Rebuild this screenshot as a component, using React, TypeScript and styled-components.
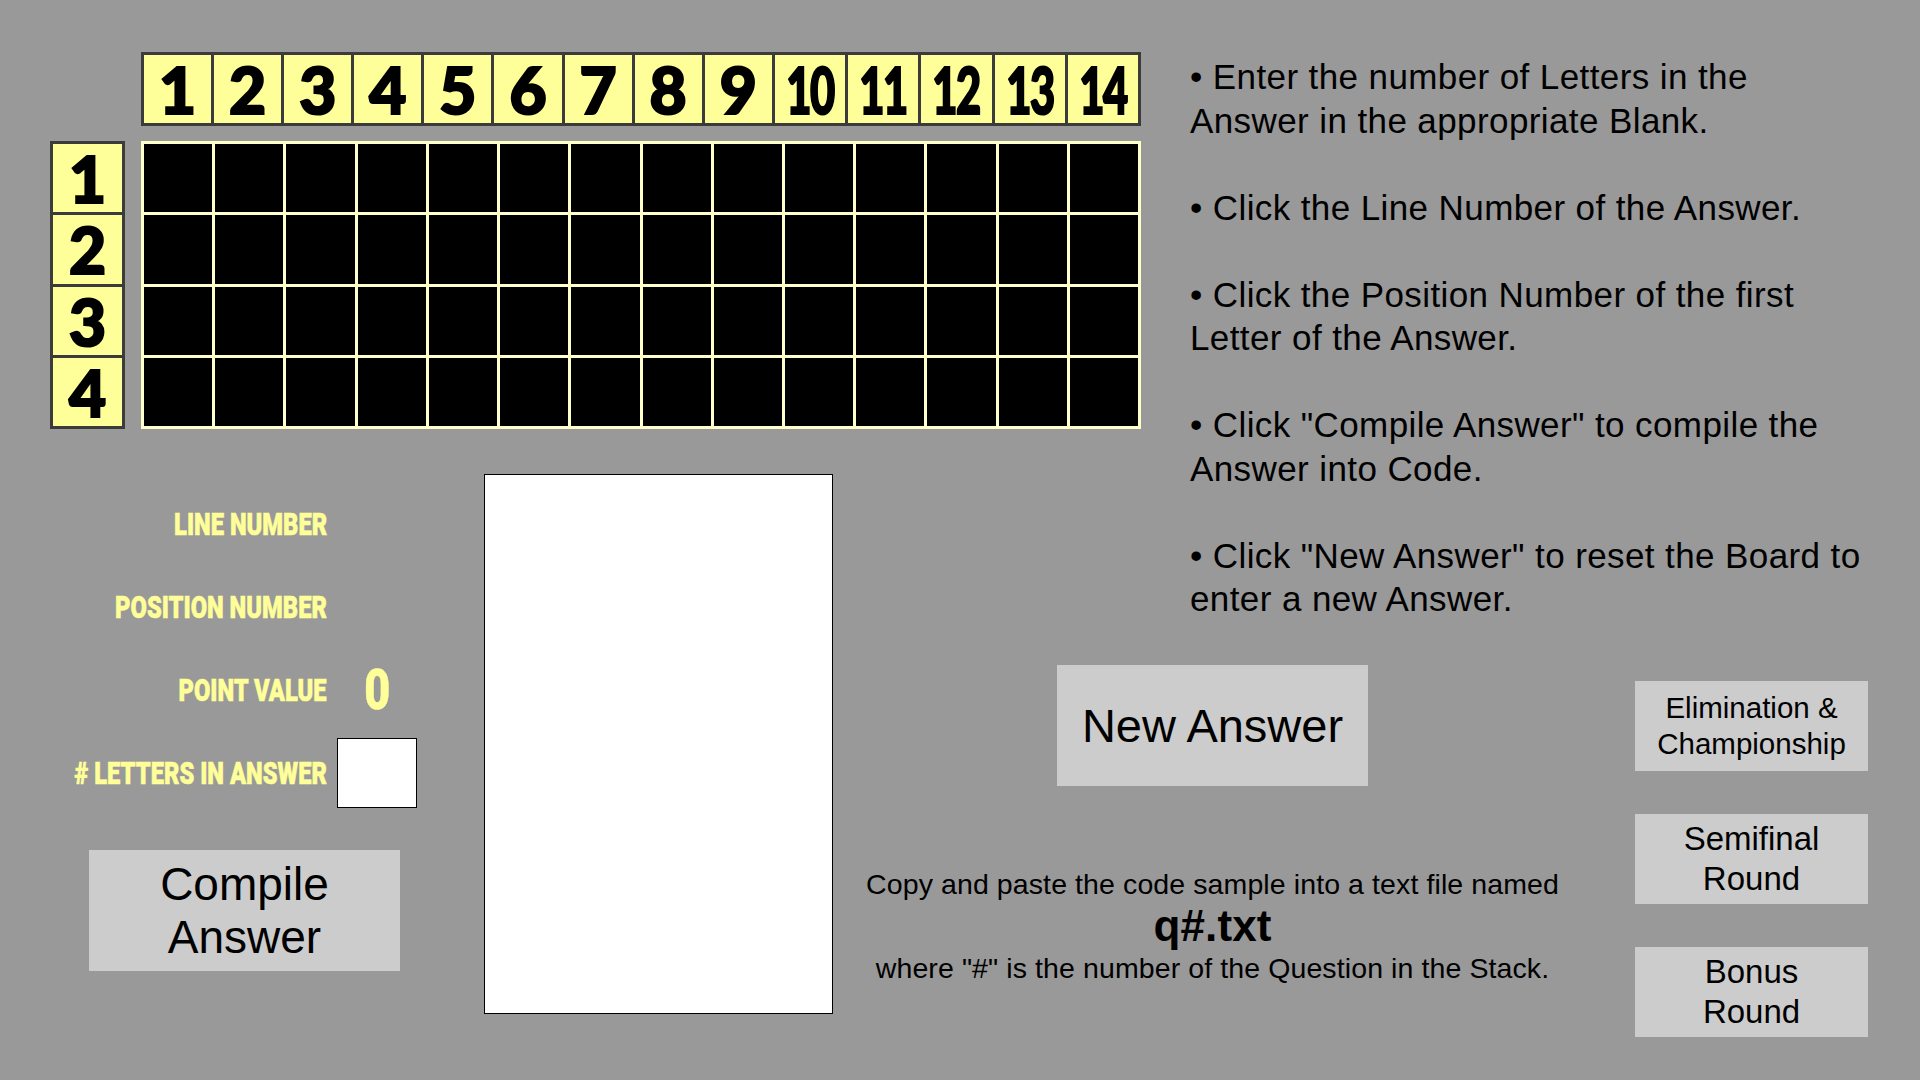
import React from "react";
import styled, { createGlobalStyle } from "styled-components";

const Global = createGlobalStyle`
  html, body { margin: 0; padding: 0; background: #999999; }
  body { font-family: "Liberation Sans", Arial, sans-serif; color: #000; }
  * { box-sizing: border-box; }
`;

const Page = styled.div`
  width: 1920px;
  height: 1080px;
  padding-left: 50px;
  display: grid;
  grid-template-columns: 800px 340px 385px 345px;
  grid-template-rows: 440px 205px 1fr;
  grid-template-areas:
    "board board instr instr"
    "lower . instr instr"
    "lower center center side";
  overflow: hidden;
  background: #999999;
`;

/* ---------- Board ---------- */
const Board = styled.div`
  grid-area: board;
  padding-top: 52px;
  display: flex;
  flex-direction: column;
  gap: 15px;
`;

const HeaderRow = styled.div`
  margin-left: 91px;
  width: 1000px;
  height: 74px;
  padding: 3px;
  background: #3b3b3b;
  display: grid;
  grid-template-columns: repeat(14, 1fr);
  gap: 3px;
`;

const NumCell = styled.div`
  background: #ffff99;
  display: flex;
  align-items: center;
  justify-content: center;
`;

const Digits = styled.span<{ $wide: boolean }>`
  font-family: "Lato Black", Lato, "DejaVu Sans", sans-serif;
  font-weight: 900;
  font-size: 64px;
  line-height: 1;
  color: #000;
  -webkit-text-stroke: 2.2px #000;
  letter-spacing: ${(p) => (p.$wide ? "-2px" : "0")};
  transform: ${(p) => (p.$wide ? "scaleX(0.68)" : "none")};
  display: inline-block;
  margin-top: 2px;
  white-space: nowrap;
`;

const BodyRow = styled.div`
  display: flex;
  gap: 16px;
`;

const LineColumn = styled.div`
  width: 75px;
  height: 288px;
  padding: 3px;
  background: #3b3b3b;
  display: grid;
  grid-template-rows: repeat(4, 1fr);
  gap: 3px;
`;

const LetterGrid = styled.div`
  width: 1000px;
  height: 288px;
  padding: 3px;
  background: #ffffcc;
  display: grid;
  grid-template-columns: repeat(14, 1fr);
  grid-template-rows: repeat(4, 1fr);
  gap: 3px;
`;

const Tile = styled.div`
  background: #000;
`;

/* ---------- Instructions ---------- */
const Instructions = styled.div`
  grid-area: instr;
  padding-top: 55px;
  font-family: "Liberation Sans", Arial, sans-serif;
  font-size: 35px;
  letter-spacing: 0.4px;
  line-height: 43.5px;
  color: #000;
`;

const Step = styled.p`
  margin: 0 0 43.5px 0;
  white-space: nowrap;
`;

/* ---------- Lower left ---------- */
const Lower = styled.div`
  grid-area: lower;
  display: flex;
  align-items: flex-start;
  padding-top: 34px;
  gap: 67px;
`;

const Controls = styled.div`
  width: 367px;
  margin-top: 15px;
  display: flex;
  flex-direction: column;
`;

const FieldGrid = styled.div`
  display: grid;
  grid-template-columns: 277px 80px;
  grid-auto-rows: 70px;
  column-gap: 10px;
  row-gap: 13px;
  align-items: center;
`;

const LabelCell = styled.div`
  display: flex;
  justify-content: flex-end;
  align-items: center;
`;

const CondensedText = styled.span<{ $size: number }>`
  display: inline-block;
  color: #ffff99;
  font-family: Roboto, "Liberation Sans", sans-serif;
  font-weight: 900;
  font-size: ${(p) => p.$size}px;
  line-height: 1;
  white-space: nowrap;
  -webkit-text-stroke: 0.6px #ffff99;
  transform: scaleX(0.765);
  transform-origin: right center;
`;

const ValueCell = styled.div`
  display: flex;
  justify-content: center;
  align-items: center;
`;

const BigValue = styled(CondensedText)`
  transform-origin: center center;
  transform: scaleX(0.8);
`;

const LetterInput = styled.input`
  width: 80px;
  height: 70px;
  margin: 0;
  border: 1px solid #000;
  background: #fff;
  padding: 0;
  font-size: 30px;
`;

const GreyButton = styled.button`
  background: #cccccc;
  border: none;
  padding: 0;
  margin: 0;
  color: #000;
  font-family: "Liberation Sans", Arial, sans-serif;
  display: flex;
  align-items: center;
  justify-content: center;
  text-align: center;
  cursor: pointer;
`;

const CompileButton = styled(GreyButton)`
  margin-top: 42px;
  margin-left: 39px;
  width: 311px;
  height: 121px;
  font-size: 46px;
  line-height: 53px;
`;

const CodeBox = styled.textarea`
  width: 349px;
  height: 540px;
  margin: 0;
  border: 1px solid #000;
  background: #fff;
  resize: none;
  outline: none;
`;

/* ---------- Center ---------- */
const Center = styled.div`
  grid-area: center;
  display: flex;
  flex-direction: column;
  align-items: center;
  padding-top: 20px;
`;

const NewAnswerButton = styled(GreyButton)`
  width: 311px;
  height: 121px;
  font-size: 47px;
  line-height: 1;
`;

const Note = styled.div`
  margin-top: 80px;
  text-align: center;
  font-family: "Liberation Sans", Arial, sans-serif;
  font-size: 28.5px;
  letter-spacing: 0.1px;
  line-height: 36px;
  white-space: nowrap;
`;

const FileName = styled.div`
  font-weight: 700;
  font-size: 44px;
  line-height: 48px;
`;

/* ---------- Side ---------- */
const Side = styled.div`
  grid-area: side;
  display: flex;
  flex-direction: column;
  padding-top: 36px;
  padding-left: 60px;
  gap: 43px;
`;

const RoundButton = styled(GreyButton)<{ $size: number; $line: number }>`
  width: 233px;
  height: 90px;
  font-size: ${(p) => p.$size}px;
  line-height: ${(p) => p.$line}px;
`;

const columns = Array.from({ length: 14 }, (_, i) => i + 1);
const lines = [1, 2, 3, 4];

const fields: { label: string; value?: "zero" | "input" }[] = [
  { label: "LINE NUMBER" },
  { label: "POSITION NUMBER" },
  { label: "POINT VALUE", value: "zero" },
  { label: "# LETTERS IN ANSWER", value: "input" },
];

export default function App() {
  return (
    <>
      <Global />
      <Page>
        <Board>
          <HeaderRow>
            {columns.map((n) => (
              <NumCell key={n}>
                <Digits $wide={n > 9}>{n}</Digits>
              </NumCell>
            ))}
          </HeaderRow>
          <BodyRow>
            <LineColumn>
              {lines.map((n) => (
                <NumCell key={n}>
                  <Digits $wide={false}>{n}</Digits>
                </NumCell>
              ))}
            </LineColumn>
            <LetterGrid>
              {lines.map((r) =>
                columns.map((c) => <Tile key={`${r}-${c}`} />)
              )}
            </LetterGrid>
          </BodyRow>
        </Board>

        <Instructions>
          <Step>
            • Enter the number of Letters in the
            <br />
            Answer in the appropriate Blank.
          </Step>
          <Step>• Click the Line Number of the Answer.</Step>
          <Step>
            • Click the Position Number of the first
            <br />
            Letter of the Answer.
          </Step>
          <Step>
            • Click "Compile Answer" to compile the
            <br />
            Answer into Code.
          </Step>
          <Step>
            • Click "New Answer" to reset the Board to
            <br />
            enter a new Answer.
          </Step>
        </Instructions>

        <Lower>
          <Controls>
            <FieldGrid>
              {fields.map((f) => (
                <React.Fragment key={f.label}>
                  <LabelCell>
                    <CondensedText $size={31}>{f.label}</CondensedText>
                  </LabelCell>
                  <ValueCell>
                    {f.value === "zero" && <BigValue $size={56}>0</BigValue>}
                    {f.value === "input" && <LetterInput type="text" />}
                  </ValueCell>
                </React.Fragment>
              ))}
            </FieldGrid>
            <CompileButton>
              Compile
              <br />
              Answer
            </CompileButton>
          </Controls>
          <CodeBox readOnly />
        </Lower>

        <Center>
          <NewAnswerButton>New Answer</NewAnswerButton>
          <Note>
            Copy and paste the code sample into a text file named
            <FileName>q#.txt</FileName>
            where "#" is the number of the Question in the Stack.
          </Note>
        </Center>

        <Side>
          <RoundButton $size={29.5} $line={36}>
            Elimination &amp;
            <br />
            Championship
          </RoundButton>
          <RoundButton $size={33} $line={40}>
            Semifinal
            <br />
            Round
          </RoundButton>
          <RoundButton $size={33} $line={40}>
            Bonus
            <br />
            Round
          </RoundButton>
        </Side>
      </Page>
    </>
  );
}
